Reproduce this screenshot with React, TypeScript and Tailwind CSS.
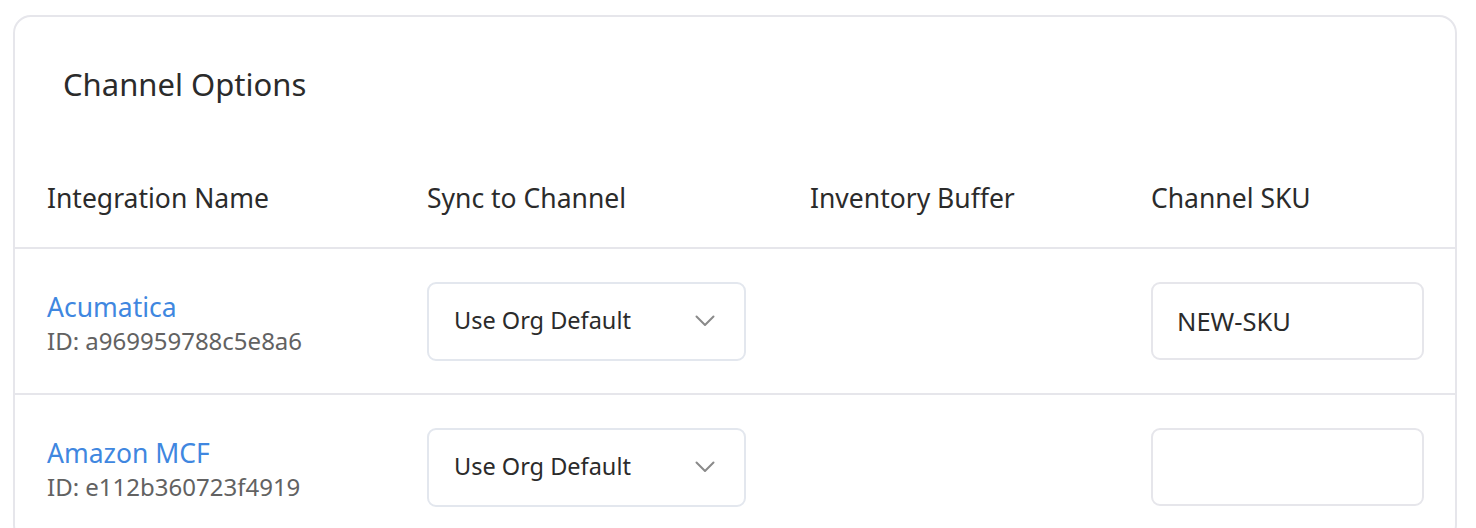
interface Integration {
  id: string
  name: string
  sync: string
  sku: string
}

const integrations: Integration[] = [
  { id: 'a969959788c5e8a6', name: 'Acumatica', sync: 'Use Org Default', sku: 'NEW-SKU' },
  { id: 'e112b360723f4919', name: 'Amazon MCF', sync: 'Use Org Default', sku: '' },
]

const cols = 'grid grid-cols-[380px_383px_341px_1fr] pl-8 pr-8'

function Chevron() {
  return (
    <svg width="20" height="12" viewBox="0 0 20 12" fill="none" className="text-[#8a8a8a]">
      <path d="M1.5 1.5 L10 10 L18.5 1.5" stroke="currentColor" strokeWidth="2" strokeLinecap="round" strokeLinejoin="round" />
    </svg>
  )
}

export default function App() {
  return (
    <div className="min-h-screen bg-white pt-[15px] pl-[13px] pr-[19px] font-['Noto_Sans','Open_Sans',sans-serif] text-[#2b2b2b]">
      <section className="rounded-[18px] border-2 border-[#e6e6eb] bg-white">
        {/* Title */}
        <div className="h-[134px] flex items-center pl-12">
          <h2 className="text-[31px] leading-none">Channel Options</h2>
        </div>

        {/* Column headers */}
        <div className={`${cols} h-[98px] items-center border-b-2 border-[#e6e6eb] text-[26.5px]`}>
          <span>Integration Name</span>
          <span>Sync to Channel</span>
          <span>Inventory Buffer</span>
          <span>Channel SKU</span>
        </div>

        {/* Rows */}
        {integrations.map((row) => (
          <div key={row.id} className={`${cols} h-[146px] items-center border-b-2 border-[#e6e6eb]`}>
            <div className="flex flex-col pt-[6px]">
              <a href="#" className="text-[26.5px] leading-[32px] text-[#3f87e0]">
                {row.name}
              </a>
              <span className="mt-[2px] text-[24px] leading-[32px] text-[#626262]">ID: {row.id}</span>
            </div>
            <div>
              <button className="w-[319px] h-[79px] flex items-center justify-between pl-[25px] pr-[29px] border-2 border-[#e3e7ee] rounded-[9px] bg-white text-[23.5px]">
                <span>{row.sync}</span>
                <Chevron />
              </button>
            </div>
            <div />
            <div>
              <input
                readOnly
                value={row.sku}
                className="w-[273px] h-[78px] px-[24px] border-2 border-[#e6e6eb] rounded-[9px] text-[25.5px] text-[#2b2b2b] outline-none"
              />
            </div>
          </div>
        ))}
      </section>
    </div>
  )
}
